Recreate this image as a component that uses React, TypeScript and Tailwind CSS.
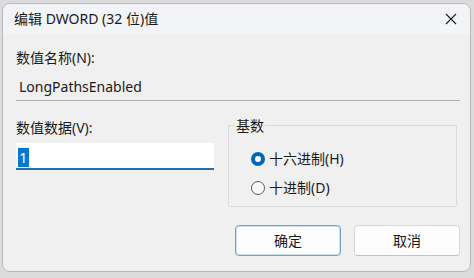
import React from 'react';

const font = { fontFamily: '"Noto Sans", "Noto Sans CJK SC", sans-serif' };

export default function App() {
  return (
    <div className="w-[474px] h-[278px] bg-[#dcdcdc] pl-[2px] pt-[3px] overflow-hidden" style={font}>
      <div className="w-[469px] h-[269px] rounded-[8px] border border-[#b8b8b8] bg-[#f0f0f0] overflow-hidden flex flex-col text-[#1a1a1a]">
        {/* title bar */}
        <div className="h-[30px] bg-[#f2f4f8] flex items-center justify-between pl-[11px] pr-[10px] shrink-0">
          <span className="text-[14px] leading-none">编辑 DWORD (32 位)值</span>
          <svg width="14" height="14" viewBox="0 0 14 14" className="mr-[2px]">
            <path d="M2 2 L12 12 M12 2 L2 12" stroke="#1a1a1a" strokeWidth="1.1" />
          </svg>
        </div>

        <div className="flex-1 px-[13px] pt-[14px]">
          <div className="text-[14px] leading-[20px]">数值名称(N):</div>
          <div className="mt-[7px] h-[26px] w-[444px] border-b border-[#b0b0b0] bg-[#f0f0f0] pl-[3px] text-[14px] leading-[24px]">
            LongPathsEnabled
          </div>

          <div className="flex mt-[17px]">
            <div className="w-[200px]">
              <div className="text-[14px] leading-[20px]">数值数据(V):</div>
              <div className="mt-[5px] h-[27px] w-[198px] bg-white border-b-2 border-[#1f6fb8] pl-[2px] pt-[2px]">
                <span className="inline-block bg-[#0078d4] text-white text-[15px] leading-[19px] px-[1px]">1</span>
              </div>
            </div>
            <div className="ml-[14px] w-[232px] h-[82px] border border-[#dcdcdc] rounded-[2px] relative mt-[7px]">
              <span className="absolute -top-[8px] left-[6px] bg-[#f0f0f0] px-[1px] text-[14px] leading-[16px]">基数</span>
              <div className="pl-[22px] pt-[23px] flex flex-col gap-[10px]">
                <div className="flex items-center gap-[4px] h-[19px]">
                  <span className="w-[14px] h-[14px] rounded-full bg-[#0067c0] flex items-center justify-center">
                    <span className="w-[6px] h-[6px] rounded-full bg-white" />
                  </span>
                  <span className="text-[14px] leading-none">十六进制(H)</span>
                </div>
                <div className="flex items-center gap-[4px] h-[19px]">
                  <span className="w-[14px] h-[14px] rounded-full border border-[#5a5a5a] bg-[#f7f7f7]" />
                  <span className="text-[14px] leading-none">十进制(D)</span>
                </div>
              </div>
            </div>
          </div>

          <div className="flex justify-end gap-[13px] mt-[18px] -mr-[3px]">
            <button className="w-[106px] h-[31px] rounded-[4px] border border-[#6ea0d0] bg-[#fdfdfd] text-[14px] shadow-[inset_0_0_0_1px_#cfe0f2]">确定</button>
            <button className="w-[106px] h-[31px] rounded-[4px] border border-[#d6d6d6] border-b-[#c2c2c2] bg-[#fdfdfd] text-[14px]">取消</button>
          </div>
        </div>
      </div>
    </div>
  );
}
